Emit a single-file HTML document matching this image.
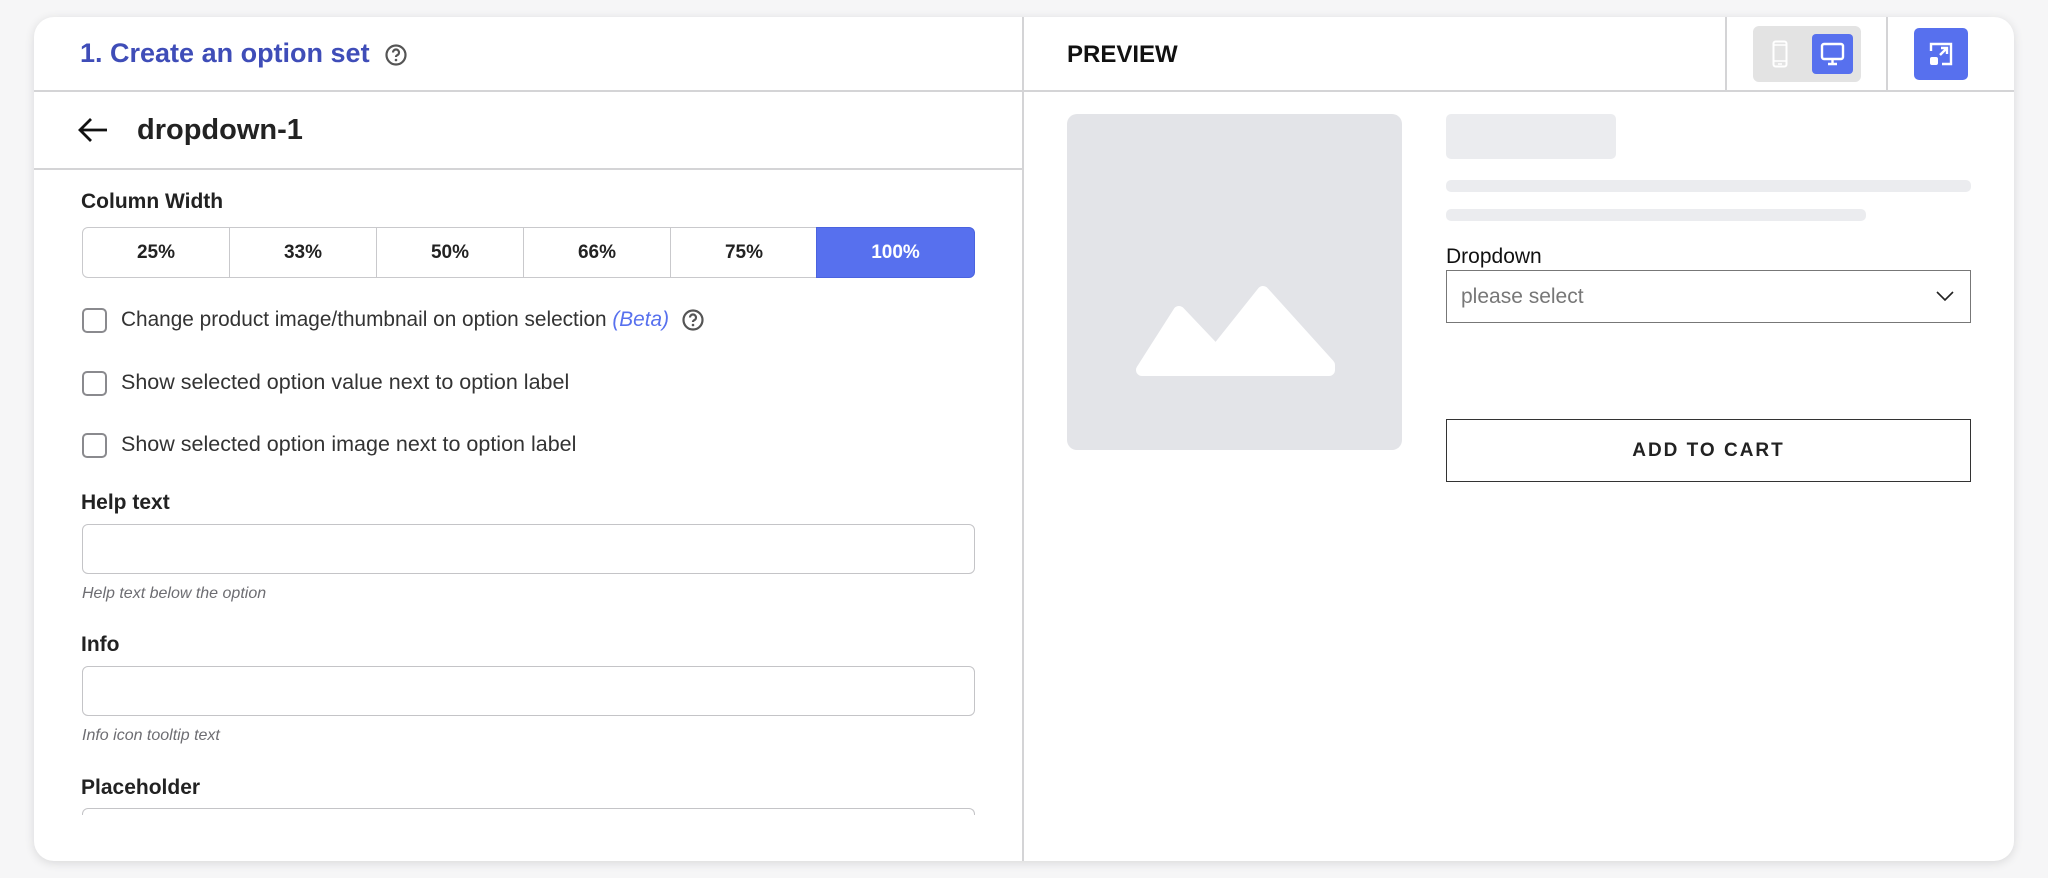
<!DOCTYPE html>
<html><head><meta charset="utf-8"><style>
*{box-sizing:border-box;margin:0;padding:0}
body{width:2048px;height:878px;background:#f6f6f7;font-family:"Liberation Sans",sans-serif;position:relative;overflow:hidden;color:#222}
.a{position:absolute}
.card{left:34px;top:17px;width:1980px;height:844px;background:#fff;border-radius:20px;box-shadow:0 2px 10px rgba(0,0,0,.12);overflow:hidden}
.hl{height:2px;background:#d4d4d6}
.vl{width:2px;background:#d4d4d6}
.lbl{font-size:21px;font-weight:bold;color:#222}
.seg{top:227px;height:51px;width:148px;border:1.5px solid #c9c9cc;font-size:19px;font-weight:bold;display:flex;align-items:center;justify-content:center;color:#222;background:#fff}
.cb{width:25px;height:25px;border:2px solid #8a8a8e;border-radius:5px;left:82px}
.ct{left:121px;font-size:21.5px;color:#333}
.inp{left:82px;width:893px;height:50px;border:1.5px solid #c4c4c7;border-radius:6px;background:#fff}
.hint{left:82px;font-size:16px;font-style:italic;color:#6d6d72}
.sk{background:#ebecef;border-radius:5px}
</style></head><body>
<div class="a card"></div>
<div class="a hl" style="left:34px;top:90px;width:1980px"></div>
<div class="a vl" style="left:1022px;top:17px;height:844px"></div>
<div class="a hl" style="left:34px;top:168px;width:989px"></div>
<div class="a vl" style="left:1725px;top:17px;height:74px"></div>
<div class="a vl" style="left:1886px;top:17px;height:74px"></div>

<div class="a" style="left:80px;top:38px;font-size:27px;font-weight:bold;color:#3f4db8">1. Create an option set</div>
<svg class="a" style="left:384px;top:43px" width="24" height="24" viewBox="0 0 24 24"><circle cx="12" cy="12" r="9.5" fill="none" stroke="#555" stroke-width="2.2"/><path d="M9 9.5a3 3 0 1 1 4 2.8c-.8.4-1 .9-1 1.7" fill="none" stroke="#555" stroke-width="2.2"/><circle cx="12" cy="17" r="1.3" fill="#555"/></svg>

<svg class="a" style="left:77px;top:116px" width="32" height="28" viewBox="0 0 32 28"><path d="M30 14H4M14 3L3 14l11 11" fill="none" stroke="#111" stroke-width="2.8"/></svg>
<div class="a" style="left:137px;top:114px;font-size:29px;font-weight:bold;color:#222">dropdown-1</div>

<div class="a lbl" style="left:81px;top:190px">Column Width</div>
<div class="a seg" style="left:82px;border-radius:6px 0 0 6px">25%</div>
<div class="a seg" style="left:229px">33%</div>
<div class="a seg" style="left:376px">50%</div>
<div class="a seg" style="left:523px">66%</div>
<div class="a seg" style="left:670px">75%</div>
<div class="a seg" style="left:816px;width:159px;background:#5770ee;border-color:#4a63df;color:#fff;border-radius:0 6px 6px 0">100%</div>

<div class="a cb" style="top:308px"></div>
<div class="a ct" style="top:308px;font-size:20.8px">Change product image/thumbnail on option selection <i style="color:#5770ee">(Beta)</i></div>
<svg class="a" style="left:681px;top:308px" width="24" height="24" viewBox="0 0 24 24"><circle cx="12" cy="12" r="9.5" fill="none" stroke="#555" stroke-width="2.2"/><path d="M9 9.5a3 3 0 1 1 4 2.8c-.8.4-1 .9-1 1.7" fill="none" stroke="#555" stroke-width="2.2"/><circle cx="12" cy="17" r="1.3" fill="#555"/></svg>
<div class="a cb" style="top:371px"></div>
<div class="a ct" style="top:370px">Show selected option value next to option label</div>
<div class="a cb" style="top:433px"></div>
<div class="a ct" style="top:432px">Show selected option image next to option label</div>

<div class="a lbl" style="left:81px;top:491px">Help text</div>
<div class="a inp" style="top:524px"></div>
<div class="a hint" style="top:585px">Help text below the option</div>
<div class="a lbl" style="left:81px;top:633px">Info</div>
<div class="a inp" style="top:666px"></div>
<div class="a hint" style="top:727px">Info icon tooltip text</div>
<div class="a lbl" style="left:81px;top:776px">Placeholder</div>
<div class="a" style="left:82px;top:808px;width:893px;height:7px;border:1.5px solid #c4c4c7;border-bottom:none;border-radius:6px 6px 0 0"></div>

<div class="a" style="left:1067px;top:41px;font-size:24px;font-weight:bold;color:#111">PREVIEW</div>
<div class="a" style="left:1753px;top:26px;width:108px;height:56px;background:#e3e3e3;border-radius:6px"></div>
<svg class="a" style="left:1772px;top:40px" width="16" height="28" viewBox="0 0 16 28"><rect x="1.5" y="1.5" width="13" height="25" rx="2" fill="none" stroke="#fff" stroke-width="2"/><path d="M2 5h12M2 21h12M6 24h4" stroke="#fff" stroke-width="1.5"/></svg>
<div class="a" style="left:1812px;top:34px;width:41px;height:40px;background:#5770ee;border-radius:4px"></div>
<svg class="a" style="left:1820px;top:42px" width="25" height="24" viewBox="0 0 25 24"><rect x="2" y="2" width="21" height="15" rx="2" fill="none" stroke="#fff" stroke-width="2.4"/><path d="M12.5 17v4M8 22h9" stroke="#fff" stroke-width="2.4"/></svg>
<div class="a" style="left:1914px;top:28px;width:54px;height:52px;background:#5770ee;border-radius:5px"></div>
<svg class="a" style="left:1927px;top:40px" width="28" height="28" viewBox="0 0 28 28"><path d="M4 11V4h20v20h-9" fill="none" stroke="#fff" stroke-width="2.4"/><path d="M13 15l7-7M14 8h6v6" fill="none" stroke="#fff" stroke-width="2.4"/><rect x="3" y="17" width="8" height="8" rx="2" fill="#fff"/></svg>

<div class="a" style="left:1067px;top:114px;width:335px;height:336px;background:#e3e4e8;border-radius:10px"></div>
<svg class="a" style="left:1130px;top:280px" width="210" height="100" viewBox="0 0 210 100"><path d="M12 90L49 32 L86 71 L133 12 L199 85 L199 90 Z" fill="#fff" stroke="#fff" stroke-width="12" stroke-linejoin="round"/></svg>
<div class="a sk" style="left:1446px;top:114px;width:170px;height:45px"></div>
<div class="a sk" style="left:1446px;top:180px;width:525px;height:12px"></div>
<div class="a sk" style="left:1446px;top:209px;width:420px;height:12px"></div>
<div class="a" style="left:1446px;top:245px;font-size:21px;color:#111">Dropdown</div>
<div class="a" style="left:1446px;top:270px;width:525px;height:53px;border:1.5px solid #777"></div>
<div class="a" style="left:1461px;top:285px;font-size:21px;color:#777">please select</div>
<svg class="a" style="left:1935px;top:289px" width="20" height="14" viewBox="0 0 20 14"><path d="M2 3l8 8 8-8" fill="none" stroke="#222" stroke-width="1.6"/></svg>
<div class="a" style="left:1446px;top:419px;width:525px;height:63px;border:1.5px solid #333;display:flex;align-items:center;justify-content:center;font-size:19px;font-weight:bold;letter-spacing:2px;color:#222">ADD TO CART</div>
</body></html>
